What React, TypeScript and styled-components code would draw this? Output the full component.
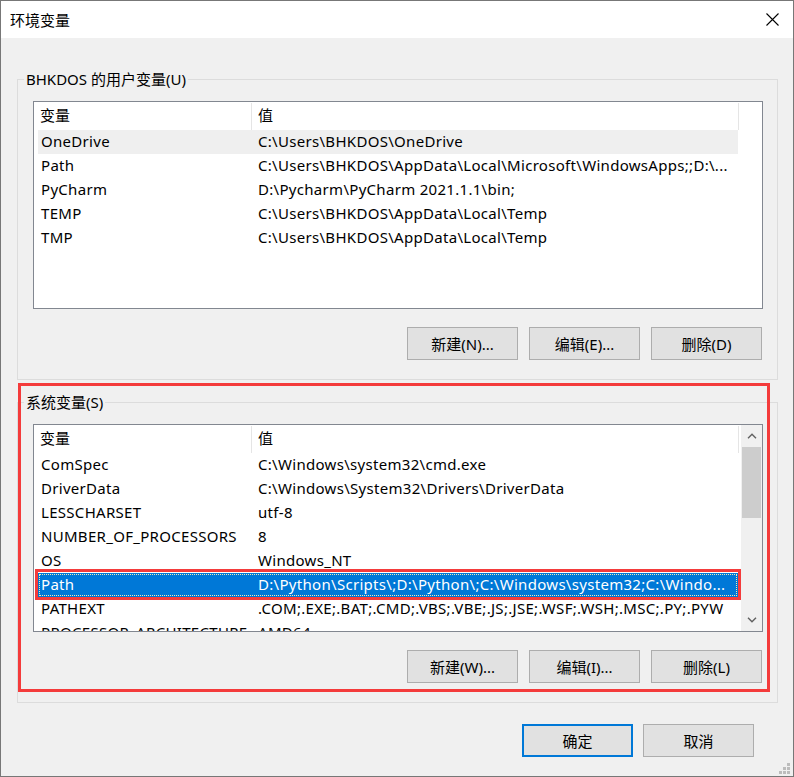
import styled, { createGlobalStyle } from 'styled-components'

type Variable = {
  name: string
  value: string
}

const userVars: Array<Variable> = [
  { name: 'OneDrive', value: 'C:\\Users\\BHKDOS\\OneDrive' },
  { name: 'Path', value: 'C:\\Users\\BHKDOS\\AppData\\Local\\Microsoft\\WindowsApps;;D:\\...' },
  { name: 'PyCharm', value: 'D:\\Pycharm\\PyCharm 2021.1.1\\bin;' },
  { name: 'TEMP', value: 'C:\\Users\\BHKDOS\\AppData\\Local\\Temp' },
  { name: 'TMP', value: 'C:\\Users\\BHKDOS\\AppData\\Local\\Temp' },
]

const systemVars: Array<Variable> = [
  { name: 'ComSpec', value: 'C:\\Windows\\system32\\cmd.exe' },
  { name: 'DriverData', value: 'C:\\Windows\\System32\\Drivers\\DriverData' },
  { name: 'LESSCHARSET', value: 'utf-8' },
  { name: 'NUMBER_OF_PROCESSORS', value: '8' },
  { name: 'OS', value: 'Windows_NT' },
  { name: 'Path', value: 'D:\\Python\\Scripts\\;D:\\Python\\;C:\\Windows\\system32;C:\\Windo...' },
  { name: 'PATHEXT', value: '.COM;.EXE;.BAT;.CMD;.VBS;.VBE;.JS;.JSE;.WSF;.WSH;.MSC;.PY;.PYW' },
  { name: 'PROCESSOR_ARCHITECTURE', value: 'AMD64' },
]

const uiFont = `"Noto Sans", "Noto Sans CJK SC", sans-serif`

const GlobalStyle = createGlobalStyle`
  html, body {
    margin: 0;
    padding: 0;
    background: #f0f0f0;
  }
  body {
    font-family: ${uiFont};
    font-size: 15px;
    color: #000;
  }
  * {
    box-sizing: border-box;
  }
`

const Dialog = styled.div`
  position: relative;
  width: 794px;
  height: 777px;
  border: 1px solid #777777;
  display: flex;
  flex-direction: column;
  background: #f0f0f0;
`

const TitleBar = styled.div`
  height: 37px;
  background: #ffffff;
  display: flex;
  align-items: center;
  justify-content: space-between;
  padding-left: 9px;
`

const Title = styled.span`
  font-size: 15px;
  line-height: 20px;
`

const CloseButton = styled.button`
  height: 37px;
  padding: 0 14px 0 20px;
  border: none;
  background: transparent;
  display: flex;
  align-items: center;
`

const Client = styled.div`
  flex: 1;
  display: flex;
  flex-direction: column;
  padding: 31px 15px 0 16px;
`

const Section = styled.div<{ $marked?: boolean }>`
  position: relative;
  margin-top: ${(p) => (p.$marked ? '12px' : '0')};

  &::after {
    content: ${(p) => (p.$marked ? "''" : 'none')};
    position: absolute;
    top: -9px;
    left: 1px;
    right: 8px;
    bottom: 11px;
    border: 3px solid #f43b3b;
    pointer-events: none;
  }
`

const Group = styled.fieldset`
  margin: 0;
  min-width: 0;
  border: 1px solid #dcdcdc;
  padding: 12px 14px 19px 15px;
`

const Caption = styled.legend`
  font-size: 15px;
  line-height: 20px;
  padding: 0 2px;
  margin-left: -9px;
`

const ListView = styled.div`
  width: 730px;
  height: 208px;
  border: 1px solid #828790;
  background: #ffffff;
  display: flex;
  overflow: hidden;
`

const ListContent = styled.div`
  flex: 1;
  min-width: 0;
  display: flex;
  flex-direction: column;
  overflow: hidden;
`

const ListHeader = styled.div`
  height: 28px;
  flex: none;
  display: flex;
`

const HeaderCell = styled.div<{ $width: number }>`
  width: ${(p) => p.$width}px;
  flex: none;
  height: 27px;
  margin-top: 1px;
  border-right: 1px solid #e5e5e5;
  padding-left: 6px;
  line-height: 25px;
  white-space: nowrap;
`

const ListBody = styled.div`
  flex: 1;
  overflow: hidden;
`

const Row = styled.div<{ $hot?: boolean; $selected?: boolean; $marked?: boolean }>`
  position: relative;
  width: 700px;
  height: 24px;
  margin-left: 4px;
  display: flex;
  line-height: 22px;
  letter-spacing: 0.3px;
  white-space: nowrap;
  background: ${(p) => (p.$selected ? '#0078d7' : p.$hot ? '#efefef' : 'transparent')};
  color: ${(p) => (p.$selected ? '#ffffff' : '#000000')};
  outline: ${(p) => (p.$selected ? '1px dotted #f7e9b0' : 'none')};
  outline-offset: -2px;

  &::after {
    content: ${(p) => (p.$marked ? "''" : 'none')};
    position: absolute;
    top: -4px;
    left: -3px;
    right: -3px;
    bottom: -3px;
    border: 3px solid #f43b3b;
  }
`

const NameCell = styled.div`
  width: 214px;
  flex: none;
  padding-left: 3px;
  overflow: hidden;
`

const ValueCell = styled.div`
  flex: 1;
  min-width: 0;
  padding-left: 6px;
  overflow: hidden;
`

const ScrollBar = styled.div`
  width: 21px;
  flex: none;
  display: flex;
  flex-direction: column;
  background: #f0f0f0;
`

const ScrollButton = styled.div`
  height: 22px;
  flex: none;
  display: flex;
  align-items: center;
  justify-content: center;
`

const ScrollTrack = styled.div`
  flex: 1;
  padding: 0 1px;
`

const ScrollThumb = styled.div`
  height: 71px;
  background: #cdcdcd;
`

const ButtonRow = styled.div`
  display: flex;
  justify-content: flex-end;
  gap: 11px;
  margin-top: 18px;
  padding-right: 1px;
`

const Button = styled.button<{ $primary?: boolean }>`
  width: 111px;
  height: 33px;
  padding: 0;
  background: #e1e1e1;
  border: ${(p) => (p.$primary ? '2px solid #0078d7' : '1px solid #adadad')};
  font-family: ${uiFont};
  font-size: 15px;
  color: #000;
`

const Footer = styled.div`
  display: flex;
  justify-content: flex-end;
  gap: 10px;
  margin-top: 21px;
  padding-right: 24px;
`

const Grip = styled.svg`
  position: absolute;
  right: 3px;
  bottom: 2px;
`

const Chevron = ({ up }: { up?: boolean }) => (
  <svg width='10' height='6' viewBox='0 0 10 6'>
    <path
      d={up ? 'M1 5.2 L5 1.2 L9 5.2' : 'M1 0.8 L5 4.8 L9 0.8'}
      fill='none'
      stroke='#606060'
      strokeWidth='1.4'
    />
  </svg>
)

type VariableListProps = {
  items: Array<Variable>
  hotIndex?: number
  selectedIndex?: number
  scroll?: boolean
}

const VariableList = ({ items, hotIndex, selectedIndex, scroll }: VariableListProps) => (
  <ListView>
    <ListContent>
      <ListHeader>
        <HeaderCell $width={218}>变量</HeaderCell>
        <HeaderCell $width={487}>值</HeaderCell>
      </ListHeader>
      <ListBody>
        {items.map((item, i) => (
          <Row
            key={item.name}
            $hot={i === hotIndex}
            $selected={i === selectedIndex}
            $marked={i === selectedIndex}
          >
            <NameCell>{item.name}</NameCell>
            <ValueCell>{item.value}</ValueCell>
          </Row>
        ))}
      </ListBody>
    </ListContent>
    {scroll && (
      <ScrollBar>
        <ScrollButton>
          <Chevron up />
        </ScrollButton>
        <ScrollTrack>
          <ScrollThumb />
        </ScrollTrack>
        <ScrollButton>
          <Chevron />
        </ScrollButton>
      </ScrollBar>
    )}
  </ListView>
)

export default function App() {
  return (
    <>
      <GlobalStyle />
      <Dialog>
        <TitleBar>
          <Title>环境变量</Title>
          <CloseButton aria-label='关闭'>
            <svg width='13' height='13' viewBox='0 0 13 13'>
              <path d='M0.5 0.5 L12.5 12.5 M12.5 0.5 L0.5 12.5' stroke='#000' strokeWidth='1.1' />
            </svg>
          </CloseButton>
        </TitleBar>
        <Client>
          <Section>
            <Group>
              <Caption>BHKDOS 的用户变量(U)</Caption>
              <VariableList items={userVars} hotIndex={0} />
              <ButtonRow>
                <Button>新建(N)...</Button>
                <Button>编辑(E)...</Button>
                <Button>删除(D)</Button>
              </ButtonRow>
            </Group>
          </Section>
          <Section $marked>
            <Group>
              <Caption>系统变量(S)</Caption>
              <VariableList items={systemVars} selectedIndex={5} scroll />
              <ButtonRow>
                <Button>新建(W)...</Button>
                <Button>编辑(I)...</Button>
                <Button>删除(L)</Button>
              </ButtonRow>
            </Group>
          </Section>
          <Footer>
            <Button $primary>确定</Button>
            <Button>取消</Button>
          </Footer>
        </Client>
        <Grip width='11' height='11' viewBox='0 0 11 11'>
          <g fill='#bcbcbc'>
            <rect x='8' y='0' width='3' height='3' />
            <rect x='4' y='4' width='3' height='3' />
            <rect x='8' y='4' width='3' height='3' />
            <rect x='0' y='8' width='3' height='3' />
            <rect x='4' y='8' width='3' height='3' />
            <rect x='8' y='8' width='3' height='3' />
          </g>
        </Grip>
      </Dialog>
    </>
  )
}
